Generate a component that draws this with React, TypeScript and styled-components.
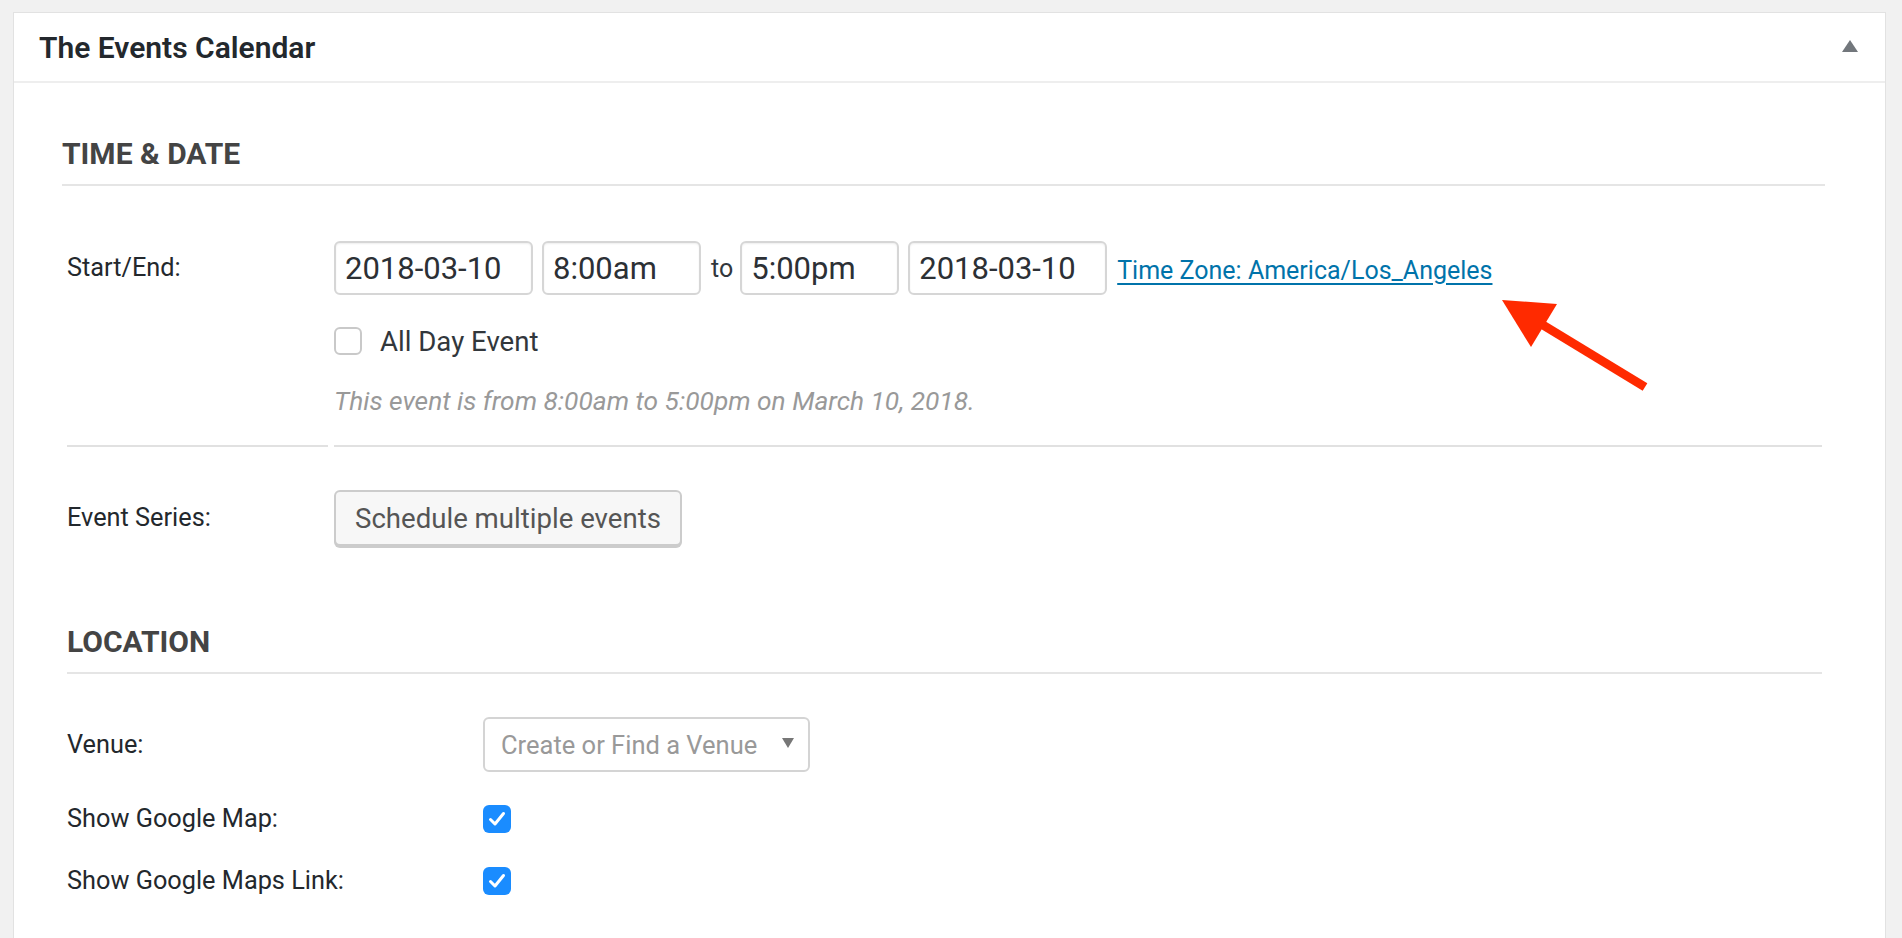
import React from "react";
import styled, { createGlobalStyle } from "styled-components";

const GlobalStyle = createGlobalStyle`
  html, body {
    margin: 0;
    padding: 0;
    background: #f1f1f1;
    font-family: Roboto, "Liberation Sans", Arial, sans-serif;
    color: #23282d;
  }
  * {
    box-sizing: border-box;
  }
`;

const Page = styled.div`
  position: relative;
  height: 100vh;
  overflow: hidden;
  padding: 12px 16px 0 13px;
`;

const Panel = styled.div`
  background: #fff;
  border: 1px solid #e2e2e2;
  min-height: 980px;
`;

const PanelHeader = styled.div`
  height: 70px;
  display: flex;
  align-items: center;
  justify-content: space-between;
  padding: 0 27px 0 25px;
  border-bottom: 2px solid #eeeeee;
`;

const PanelTitle = styled.h2`
  margin: 0;
  font-size: 30px;
  font-weight: 600;
  color: #23282d;
`;

const Toggle = styled.span`
  width: 0;
  height: 0;
  border-left: 8px solid transparent;
  border-right: 8px solid transparent;
  border-bottom: 12px solid #72777c;
  margin-top: -2px;
`;

const PanelBody = styled.div`
  padding: 0 60px 0 48px;
`;

const SectionTitle = styled.h3<{ $top: number }>`
  margin: ${(p) => p.$top}px 0 0;
  padding-bottom: 12px;
  font-size: 30px;
  line-height: 36px;
  font-weight: 700;
  color: #444;
  border-bottom: 2px solid #e5e5e5;
`;

const FormTable = styled.div`
  padding: 0 3px 0 5px;
`;

const Row = styled.div`
  display: grid;
  grid-template-columns: 261px 1fr;
  column-gap: 6px;
`;

const Cell = styled.div<{ $top: number; $bottom?: number; $divider?: boolean }>`
  padding-top: ${(p) => p.$top}px;
  padding-bottom: ${(p) => p.$bottom ?? 0}px;
  border-bottom: ${(p) => (p.$divider ? "2px solid #e1e1e1" : "none")};
`;

const Label = styled.div<{ $lh: number }>`
  font-size: 25.3px;
  line-height: ${(p) => p.$lh}px;
  color: #23282d;
`;

const InputLine = styled.div`
  display: flex;
  align-items: center;
  height: 54px;
`;

const TextInput = styled.div<{ $w: number }>`
  width: ${(p) => p.$w}px;
  height: 54px;
  display: flex;
  align-items: center;
  padding-left: 9px;
  margin-right: 9px;
  border: 2px solid #d6d6d6;
  border-radius: 6px;
  box-shadow: inset 0 1px 2px rgba(0, 0, 0, 0.07);
  font-size: 31px;
  color: #2c3035;
`;

const To = styled.span`
  font-size: 25px;
  color: #32373c;
  margin: 0 7px 0 1px;
`;

const TzLink = styled.a`
  font-size: 25px;
  color: #0073aa;
  text-decoration: underline;
  text-underline-offset: 4px;
  margin-left: 1px;
  margin-top: 4px;
`;

const CheckLine = styled.label`
  display: flex;
  align-items: center;
  height: 36px;
  margin-top: 28px;
  gap: 18px;
  font-size: 27.6px;
  color: #32373c;
`;

const Box = styled.span<{ $checked?: boolean }>`
  width: 28px;
  height: 28px;
  flex: none;
  border-radius: 6px;
  display: flex;
  align-items: center;
  justify-content: center;
  background: ${(p) => (p.$checked ? "#1a8cff" : "#fff")};
  border: ${(p) => (p.$checked ? "none" : "2px solid #c9c9c9")};
`;

const Note = styled.p`
  margin: 27px 0 0;
  font-size: 26.3px;
  line-height: 30px;
  font-style: italic;
  color: #999;
`;

const Button = styled.button`
  height: 56px;
  padding: 0 19px;
  background: #f7f7f7;
  border: 2px solid #cccccc;
  border-radius: 6px;
  box-shadow: 0 2px 0 #cccccc;
  font-family: inherit;
  font-size: 27.6px;
  color: #555;
`;

const LocationSection = styled.div`
  padding: 0 3px 0 5px;
`;

const LocationGrid = styled.div`
  display: grid;
  grid-template-columns: 416px 1fr;
  row-gap: 32px;
  align-items: center;
  padding-top: 43px;
`;

const Select = styled.div`
  width: 327px;
  height: 55px;
  display: flex;
  align-items: center;
  justify-content: space-between;
  padding: 0 14px 0 16px;
  border: 2px solid #d4d4d4;
  border-radius: 6px;
  font-size: 25.5px;
  color: #999;
`;

const Caret = styled.span`
  width: 0;
  height: 0;
  border-left: 6px solid transparent;
  border-right: 6px solid transparent;
  border-top: 10px solid #777;
  margin-top: -4px;
`;

const Arrow = styled.svg`
  position: absolute;
  left: 1490px;
  top: 290px;
`;

const Check = () => (
  <svg width="18" height="16" viewBox="0 0 18 16">
    <path d="M2.5 8.5 L7 13 L15.5 2.5" fill="none" stroke="#fff" strokeWidth="3" strokeLinecap="round" strokeLinejoin="round" />
  </svg>
);

export default function App() {
  return (
    <>
      <GlobalStyle />
      <Page>
        <Panel>
          <PanelHeader>
            <PanelTitle>The Events Calendar</PanelTitle>
            <Toggle />
          </PanelHeader>
          <PanelBody>
            <SectionTitle $top={53}>TIME &amp; DATE</SectionTitle>
            <FormTable>
              <Row>
                <Cell $top={55} $bottom={29} $divider>
                  <Label $lh={54}>Start/End:</Label>
                </Cell>
                <Cell $top={55} $bottom={29} $divider>
                  <InputLine>
                    <TextInput $w={199}>2018-03-10</TextInput>
                    <TextInput $w={159}>8:00am</TextInput>
                    <To>to</To>
                    <TextInput $w={159}>5:00pm</TextInput>
                    <TextInput $w={199}>2018-03-10</TextInput>
                    <TzLink href="#">Time Zone: America/Los_Angeles</TzLink>
                  </InputLine>
                  <CheckLine>
                    <Box />
                    All Day Event
                  </CheckLine>
                  <Note>This event is from 8:00am to 5:00pm on March 10, 2018.</Note>
                </Cell>
              </Row>
              <Row>
                <Cell $top={43}>
                  <Label $lh={56}>Event Series:</Label>
                </Cell>
                <Cell $top={43}>
                  <Button>Schedule multiple events</Button>
                </Cell>
              </Row>
            </FormTable>
            <LocationSection>
              <SectionTitle $top={78}>LOCATION</SectionTitle>
              <LocationGrid>
                <Label $lh={30}>Venue:</Label>
                <Select>
                  Create or Find a Venue
                  <Caret />
                </Select>
                <Label $lh={30}>Show Google Map:</Label>
                <Box $checked>
                  <Check />
                </Box>
                <Label $lh={30}>Show Google Maps Link:</Label>
                <Box $checked>
                  <Check />
                </Box>
              </LocationGrid>
            </LocationSection>
          </PanelBody>
        </Panel>
        <Arrow width="170" height="110" viewBox="0 0 170 110">
          <line x1="48" y1="32" x2="155" y2="97" stroke="#ff2a00" strokeWidth="9" />
          <polygon points="12,10 67,14 41,57" fill="#ff2a00" />
        </Arrow>
      </Page>
    </>
  );
}
